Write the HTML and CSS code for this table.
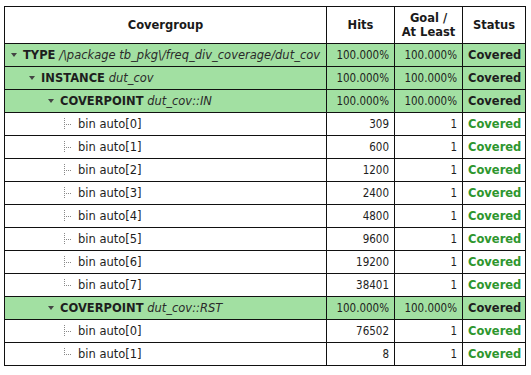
FILE: index.html
```html
<!DOCTYPE html>
<html>
<head>
<meta charset="utf-8">
<link rel="stylesheet" href="styles.css">
</head>
<body>
<div class="wrap">
<table class="cov">
  <colgroup>
    <col class="c-name"><col class="c-hits"><col class="c-goal"><col class="c-status">
  </colgroup>
  <thead>
    <tr><th>Covergroup</th><th>Hits</th><th>Goal /<br>At Least</th><th>Status</th></tr>
  </thead>
  <tbody>
    <tr class="grp"><td class="name l0"><span class="tri"></span><b>TYPE</b> <i>/\package tb_pkg\/freq_div_coverage/dut_cov</i></td><td class="num">100.000%</td><td class="num">100.000%</td><td class="st">Covered</td></tr>
    <tr class="grp"><td class="name l1"><span class="tri"></span><b>INSTANCE</b> <i>dut_cov</i></td><td class="num">100.000%</td><td class="num">100.000%</td><td class="st">Covered</td></tr>
    <tr class="grp"><td class="name l2"><span class="tri"></span><b>COVERPOINT</b> <i>dut_cov::IN</i></td><td class="num">100.000%</td><td class="num">100.000%</td><td class="st">Covered</td></tr>
    <tr><td class="name l3"><span class="br"></span>bin auto[0]</td><td class="num">309</td><td class="num">1</td><td class="st ok">Covered</td></tr>
    <tr><td class="name l3"><span class="br"></span>bin auto[1]</td><td class="num">600</td><td class="num">1</td><td class="st ok">Covered</td></tr>
    <tr><td class="name l3"><span class="br"></span>bin auto[2]</td><td class="num">1200</td><td class="num">1</td><td class="st ok">Covered</td></tr>
    <tr><td class="name l3"><span class="br"></span>bin auto[3]</td><td class="num">2400</td><td class="num">1</td><td class="st ok">Covered</td></tr>
    <tr><td class="name l3"><span class="br"></span>bin auto[4]</td><td class="num">4800</td><td class="num">1</td><td class="st ok">Covered</td></tr>
    <tr><td class="name l3"><span class="br"></span>bin auto[5]</td><td class="num">9600</td><td class="num">1</td><td class="st ok">Covered</td></tr>
    <tr><td class="name l3"><span class="br"></span>bin auto[6]</td><td class="num">19200</td><td class="num">1</td><td class="st ok">Covered</td></tr>
    <tr><td class="name l3"><span class="br last"></span>bin auto[7]</td><td class="num">38401</td><td class="num">1</td><td class="st ok">Covered</td></tr>
    <tr class="grp"><td class="name l2"><span class="tri"></span><b>COVERPOINT</b> <i>dut_cov::RST</i></td><td class="num">100.000%</td><td class="num">100.000%</td><td class="st">Covered</td></tr>
    <tr><td class="name l3"><span class="br"></span>bin auto[0]</td><td class="num">76502</td><td class="num">1</td><td class="st ok">Covered</td></tr>
    <tr><td class="name l3"><span class="br last"></span>bin auto[1]</td><td class="num">8</td><td class="num">1</td><td class="st ok">Covered</td></tr>
  </tbody>
</table>
</div>
</body>
</html>
```

FILE: styles.css
```css
html, body {
  margin: 0;
  padding: 0;
  background: #fff;
}
.wrap {
  padding: 6px 0 0 4px;
}
.cov {
  border-collapse: collapse;
  table-layout: fixed;
  width: 522px;
  font-family: "DejaVu Sans", Verdana, sans-serif;
  font-size: 11.5px;
  color: #1e1e1e;
}
.c-name { width: 322px; }
.c-hits { width: 68px; }
.c-goal { width: 68px; }
.c-status { width: 63px; }
.cov th, .cov td {
  border: 1px solid #111;
  padding: 0 4px;
  white-space: nowrap;
  overflow: hidden;
}
.cov th {
  height: 36px;
  font-weight: bold;
  text-align: center;
  line-height: 14px;
  color: #1a1a1a;
}
.cov td {
  height: 22px;
  line-height: 14px;
  vertical-align: middle;
}
.cov .grp td {
  background: #a2e0a2;
}
.cov td.num {
  text-align: right;
  font-family: "DejaVu Sans Condensed", "DejaVu Sans", sans-serif;
  font-stretch: condensed;
  padding-right: 5px;
  padding-left: 0;
}
.cov td.st {
  font-weight: bold;
  text-align: left;
  padding-left: 5px;
  padding-right: 0;
}
.cov td.ok {
  color: #2e962e;
}
.name i {
  font-style: italic;
  color: #2a2a2a;
}
.cov td.l0 { padding-left: 6px; }
.cov td.l1 { padding-left: 24px; }
.cov td.l2 { padding-left: 43px; }
.cov td.l3 { padding-left: 57px; }
.tri {
  display: inline-block;
  width: 0;
  height: 0;
  border-left: 3px solid transparent;
  border-right: 3px solid transparent;
  border-top: 4px solid #444;
  margin-right: 6px;
  vertical-align: 2px;
}
.br {
  display: inline-block;
  width: 9px;
  height: 12px;
  margin-right: 7px;
  vertical-align: -2px;
  background-image:
    repeating-linear-gradient(to bottom, #888 0 1px, transparent 1px 2px),
    repeating-linear-gradient(to right, #888 0 1px, transparent 1px 2px);
  background-size: 1px 12px, 7px 1px;
  background-position: 2px 0, 2px 6px;
  background-repeat: no-repeat;
}
.br.last {
  background-size: 1px 7px, 7px 1px;
}
```
